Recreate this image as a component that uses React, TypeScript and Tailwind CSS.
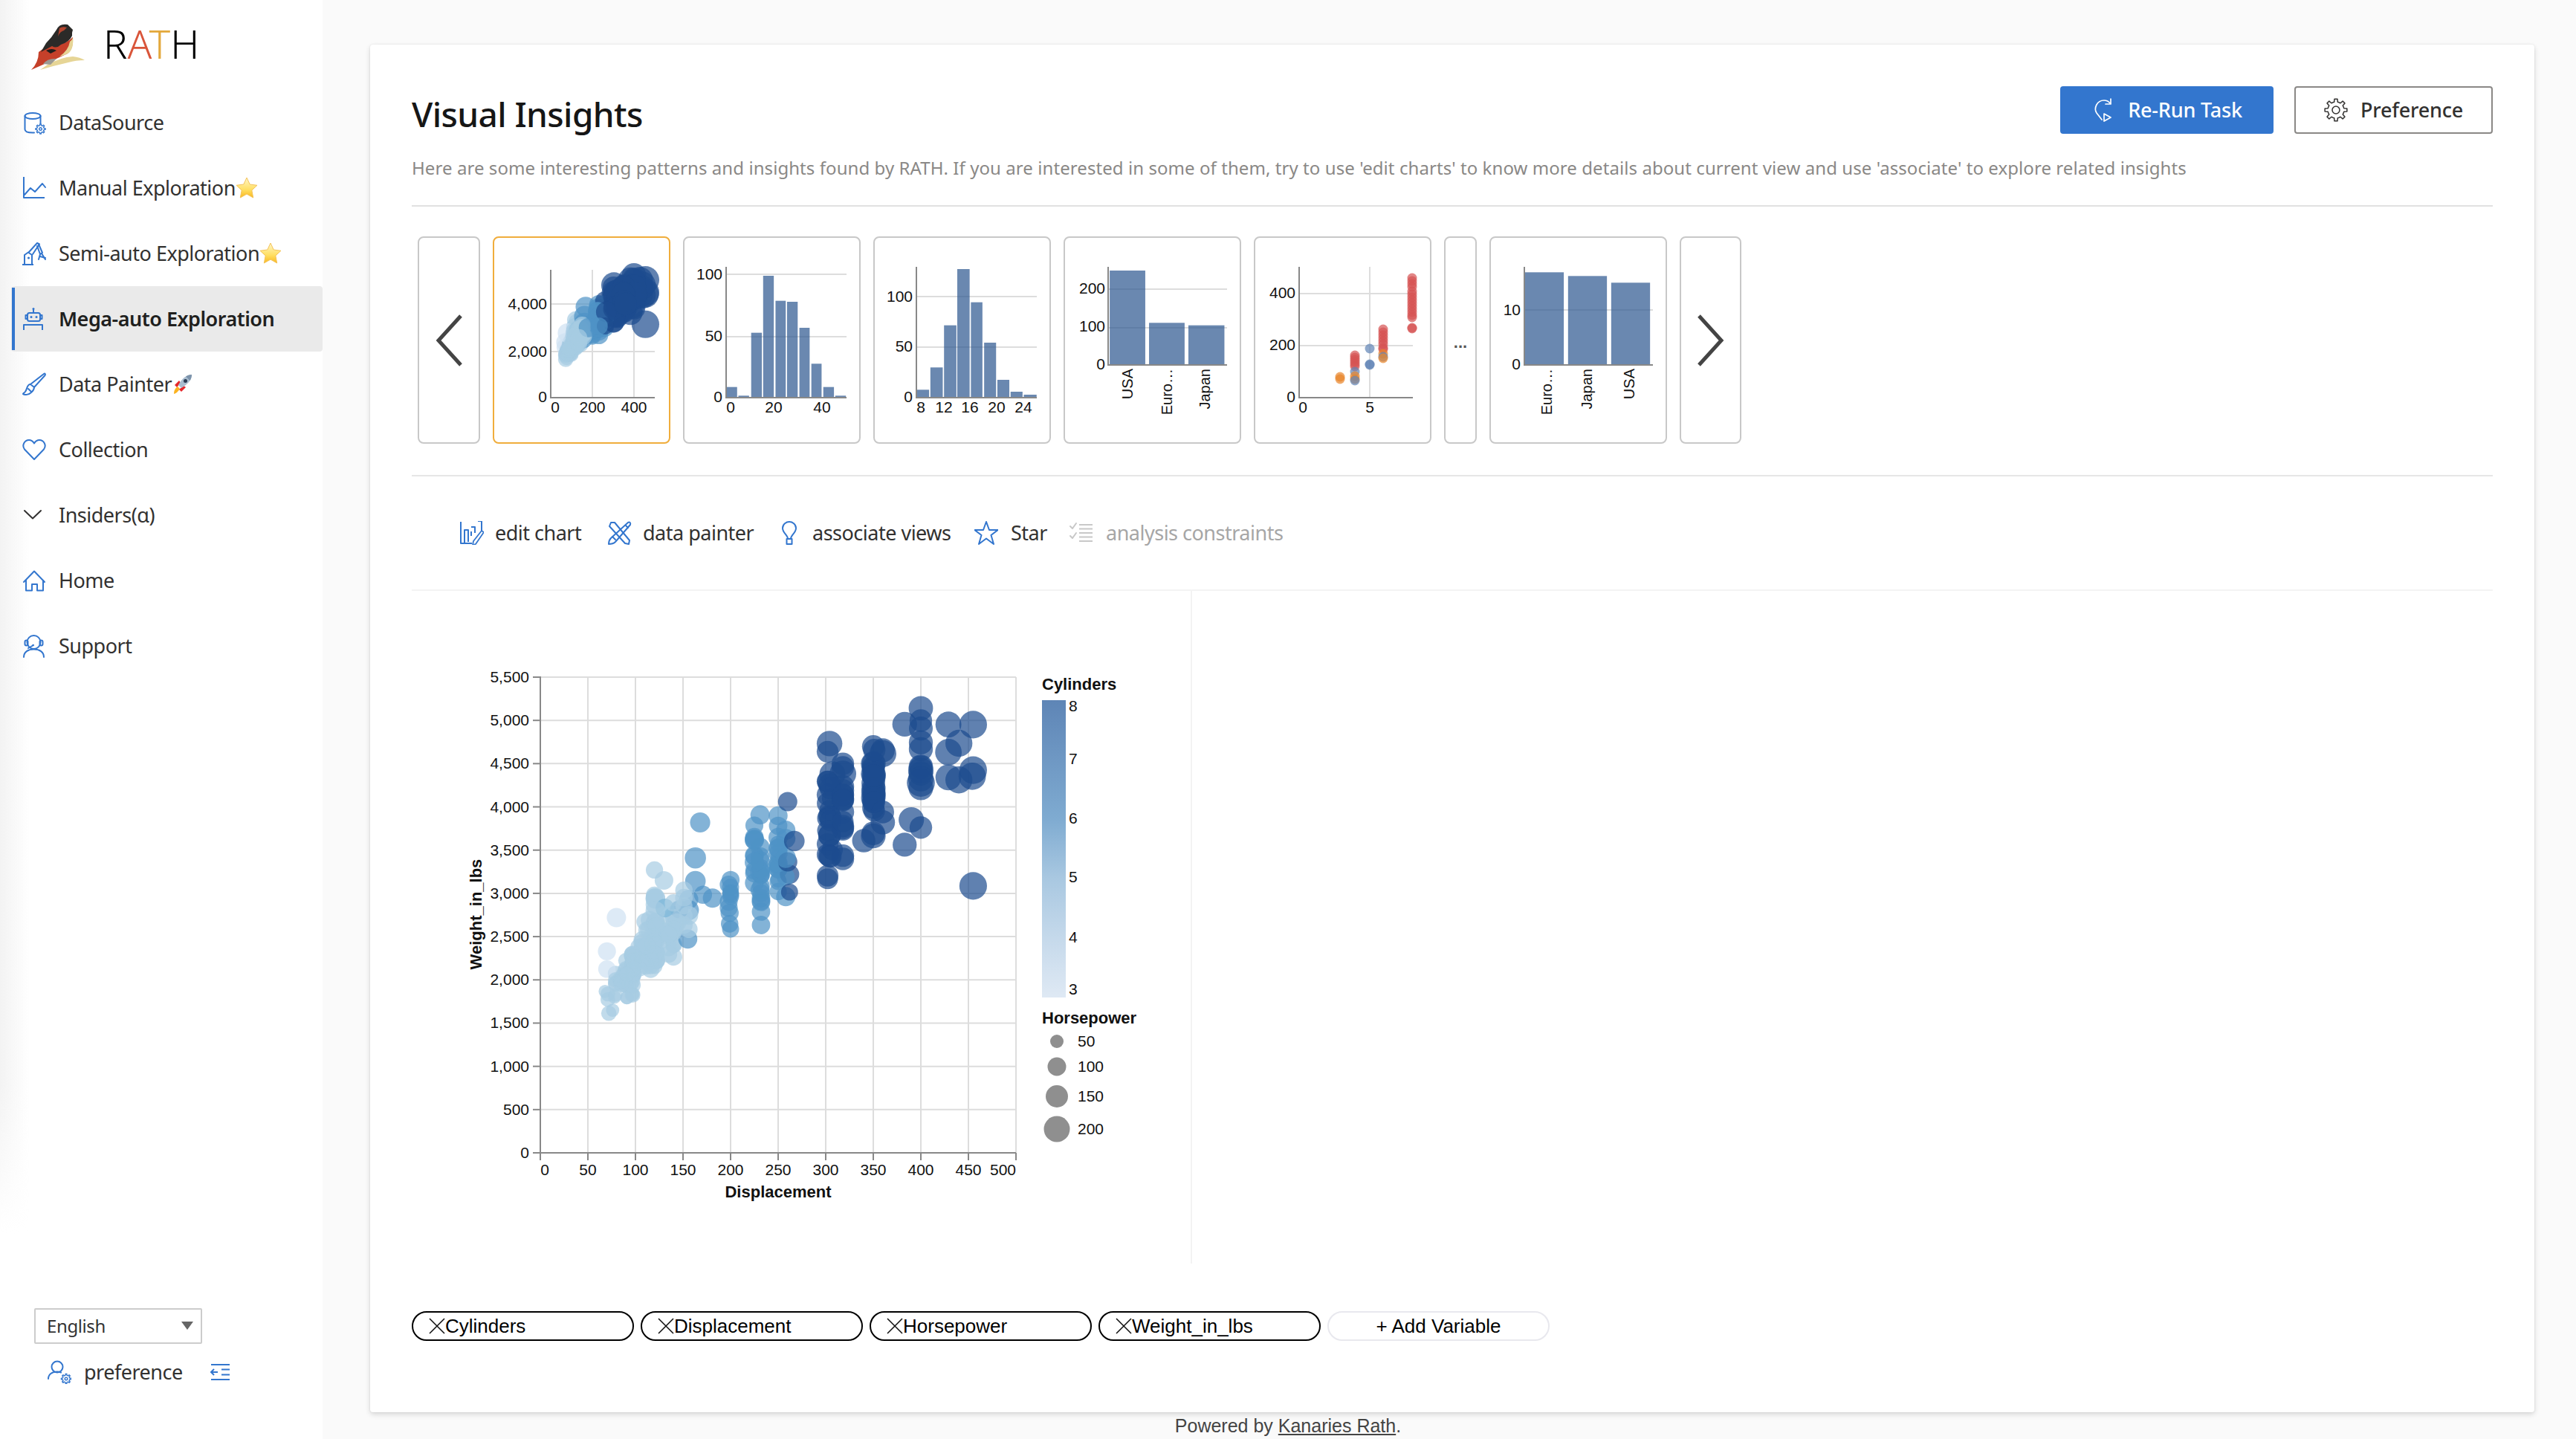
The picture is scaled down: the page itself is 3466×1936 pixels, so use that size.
import type { ReactNode } from "react"

const BLUE = "#3376ce"

// Displacement, Weight, Horsepower, Cylinders
const CARS = `307,3504,130,8 350,3693,165,8 318,3436,150,8 304,3433,150,8 302,3449,140,8 429,4341,198,8 454,4354,220,8 440,4312,215,8 455,4425,225,8 390,3850,190,8 383,3563,170,8 340,3609,160,8 400,3761,150,8 455,3086,225,8 113,2372,95,4 198,2833,95,6 199,2774,97,6 200,2587,85,6 97,2130,88,4 97,1835,46,4 110,2672,87,4 107,2430,90,4 104,2375,95,4 121,2234,113,4 199,2648,90,6 360,4615,215,8 307,4376,200,8 318,4382,210,8 304,4732,193,8 97,2130,88,4 140,2264,90,4 113,2228,95,4 232,2634,100,6 225,3439,105,6 250,3329,100,6 250,3302,88,6 232,3288,100,6 350,4209,165,8 400,4464,175,8 351,4154,153,8 318,4096,150,8 383,4955,180,8 400,4746,170,8 400,5140,175,8 258,2962,110,6 140,2408,72,4 250,3282,100,6 250,3139,88,6 122,2220,86,4 116,2123,90,4 79,2074,70,4 88,2065,76,4 71,1773,65,4 72,1613,69,4 97,1834,60,4 91,1955,70,4 113,2278,95,4 97,2126,80,4 97,2254,54,4 140,2408,90,4 122,2226,86,4 350,4274,165,8 400,4385,175,8 318,4135,150,8 351,4129,153,8 304,3672,150,8 429,4633,208,8 350,4502,155,8 350,4456,160,8 400,4422,190,8 70,2330,97,3 304,3892,150,8 307,4098,130,8 302,4294,140,8 318,4077,150,8 121,2933,112,4 121,2511,76,4 120,2979,87,4 96,2189,69,4 122,2395,86,4 97,2288,92,4 120,2506,97,4 98,2164,80,4 97,2100,88,4 350,4100,175,8 304,3672,150,8 350,3988,145,8 302,4042,137,8 318,3777,150,8 429,4952,198,8 400,4464,150,8 351,4363,158,8 318,4237,150,8 440,4735,215,8 455,4951,225,8 360,3821,175,8 225,3121,105,6 250,3278,100,6 232,2945,100,6 250,3021,88,6 198,2904,95,6 97,1950,46,4 400,4997,150,8 400,4906,167,8 360,4654,170,8 350,4499,180,8 232,2789,100,6 97,2279,88,4 140,2401,72,4 108,2379,94,4 70,2124,90,3 122,2310,85,4 155,2472,107,6 98,2265,90,4 350,4082,145,8 400,4278,230,8 68,1867,49,4 116,2158,75,4 114,2582,91,4 121,2868,112,4 318,3399,150,8 121,2660,110,4 156,2807,122,6 350,3664,180,8 198,3102,95,6 232,2901,100,6 250,3336,100,6 79,1950,67,4 122,2451,80,4 71,1836,65,4 140,2542,75,4 250,3781,100,6 258,3632,110,6 225,3613,105,6 302,4141,140,8 350,4699,150,8 318,4457,150,8 302,4638,140,8 304,4257,150,8 98,2219,83,4 79,1963,67,4 97,2300,78,4 76,1649,52,4 83,2003,61,4 90,2125,75,4 90,2108,75,4 116,2246,75,4 120,2489,97,4 108,2391,93,4 79,2000,67,4 225,3264,95,6 250,3459,105,6 250,3432,72,6 250,3158,72,6 400,4668,170,8 350,4440,145,8 318,4498,150,8 351,4657,148,8 231,3907,110,6 250,3897,105,6 258,3730,110,6 225,3785,95,6 231,3039,110,6 262,3221,110,8 302,3169,129,8 97,2171,75,4 140,2639,83,4 232,2914,100,6 140,2592,78,4 134,2702,96,4 90,2223,71,4 119,2545,97,4 171,2984,97,6 90,1937,70,4 232,3211,90,6 115,2694,95,4 120,2957,88,4 121,2671,98,4 121,2945,115,4 91,1795,53,4 107,2464,86,4 116,2220,81,4 140,2572,92,4 98,2255,79,4 101,2202,83,4 305,4215,140,8 318,4190,150,8 304,3962,120,8 351,4215,152,8 225,3233,100,6 250,3353,105,6 200,3012,81,6 232,3085,90,6 85,2035,52,4 98,2164,60,4 90,1937,70,4 91,1795,53,4 225,3651,100,6 250,3574,78,6 250,3645,110,6 258,3193,95,6 97,1825,71,4 85,1990,70,4 97,2155,75,4 140,2565,72,4 130,3150,102,4 318,3940,150,8 120,3270,88,4 156,2930,108,6 168,3820,120,6 350,4380,180,8 350,4055,145,8 302,3870,130,8 318,3755,150,8 98,2045,68,4 111,2155,80,4 79,1825,58,4 122,2300,96,4 85,1945,70,4 305,3880,145,8 260,4060,110,8 318,4140,145,8 302,4295,130,8 250,3520,110,6 231,3425,105,6 225,3630,100,6 250,3525,98,6 400,4220,180,8 350,4165,170,8 400,4325,190,8 351,4335,149,8 97,1940,78,4 151,2740,88,4 97,2265,75,4 140,2755,89,4 98,2051,63,4 98,2075,83,4 97,1985,67,4 97,2190,78,4 146,2815,97,6 121,2600,110,4 80,2720,110,3 90,1985,48,4 98,2070,66,4 78,1800,52,4 85,1985,70,4 91,2070,60,4 260,3365,110,8 318,3735,140,8 302,3570,139,8 231,3535,105,6 200,3155,95,6 200,2965,85,6 140,2720,88,4 225,3430,100,6 232,3210,90,6 231,3380,105,6 200,3070,85,6 225,3620,110,6 258,3410,120,6 305,3425,145,8 302,3205,139,8 318,4080,140,8 98,2155,68,4 134,2560,95,4 119,2300,97,4 105,2230,75,4 134,2515,95,4 156,2745,105,4 151,2855,85,4 119,2405,97,4 131,2830,103,5 163,3140,125,6 121,2795,115,4 163,3410,133,6 89,1990,71,4 98,2135,68,4 231,3245,115,6 200,2990,85,6 140,2890,88,4 232,3265,90,6 225,3360,110,6 305,3840,130,8 302,3725,129,8 351,3955,138,8 318,3830,135,8 350,4360,155,8 351,4054,142,8 267,3605,125,8 360,3940,150,8 89,2050,71,4 86,1985,65,4 98,2215,75,4 108,2245,75,4 119,2434,92,4 120,2290,90,4 107,2210,72,4 112,2395,88,4 112,2575,88,4 135,2525,84,4 135,2370,84,4 151,2635,90,4 151,2950,92,4 151,3035,90,4 105,2125,63,4 98,2125,70,4 120,2160,75,4 91,2065,67,4 144,2665,96,4 135,2295,84,4 122,2625,86,4 140,2585,88,4 156,2585,92,4 181,2945,110,6 262,3015,85,8 232,3003,90,6 135,2525,84,4`
  .split(" ")
  .map((row) => row.split(",").map(Number))

const CYL_COLOR: Record<number, string> = {
  3: "#cfe1f2",
  4: "#a6cce3",
  5: "#7ab6d9",
  6: "#4f93c6",
  8: "#1d4c8f",
}

const radius = (hp: number) => Math.sqrt(hp) * 1.24

// page coordinates read off the two thumbnail crops
const ax = (v: number) => 540 + v / 1.742
const bx = (v: number) => 1400 + v / 1.568
const zy = (v: number) => 300 + v / 3

function gearPath(cx: number, cy: number, outer: number, inner: number, teeth: number) {
  const pts: string[] = []
  for (let i = 0; i < teeth; i++) {
    const step = (Math.PI * 2) / teeth
    const a = i * step
    const list: [number, number][] = [
      [inner, a - step * 0.5],
      [inner, a - step * 0.27],
      [outer, a - step * 0.17],
      [outer, a + step * 0.17],
      [inner, a + step * 0.27],
    ]
    list.forEach(([r, t]) => pts.push(`${(cx + r * Math.cos(t)).toFixed(2)} ${(cy + r * Math.sin(t)).toFixed(2)}`))
  }
  return `M${pts.join("L")}Z`
}

function Ico({ children, className = "", color = BLUE, sw = 2 }: { children: ReactNode; className?: string; color?: string; sw?: number }) {
  return (
    <svg
      viewBox="0 0 32 32"
      fill="none"
      stroke={color}
      strokeWidth={sw}
      strokeLinecap="round"
      strokeLinejoin="round"
      className={`h-[32px] w-[32px] shrink-0 ${className}`}
    >
      {children}
    </svg>
  )
}

const SmallGear = ({ cx, cy }: { cx: number; cy: number }) => (
  <>
    <path d={gearPath(cx, cy, 6.6, 4.8, 8)} strokeWidth={1.4} />
    <circle cx={cx} cy={cy} r={1.8} strokeWidth={1.4} />
  </>
)

const DataSourceIcon = () => (
  <Ico>
    <ellipse cx="14" cy="7" rx="10.5" ry="4" />
    <path d="M3.5 7V25C3.5 28 8 29.5 14 29.5H16" />
    <path d="M24.5 7V17" />
    <SmallGear cx={24.5} cy={24.5} />
  </Ico>
)
const ManualIcon = () => (
  <Ico>
    <path d="M2 1V29H30" strokeLinecap="butt" />
    <path d="M3 25L11 16L17 21L27 10L31 15" />
  </Ico>
)
const SemiIcon = () => (
  <Ico>
    <path d="M0 31H15M3 31V18L8 14.5L13 18V31" strokeLinecap="butt" />
    <circle cx="8.5" cy="22" r="1.6" fill={BLUE} stroke="none" />
    <path d="M9 14L20 2L23 3.500L14 17" />
    <path d="M22 3.500L27 15L24 17L20 6" />
    <path d="M24 17L22 24M26 16L31 24" />
    <path d="M24 20L31 22" />
  </Ico>
)
const RobotIcon = () => (
  <Ico>
    <circle cx="15" cy="2.500" r="1.500" fill={BLUE} stroke="none" />
    <path d="M15 3V8" />
    <rect x="7" y="8" width="17" height="11" rx="2.500" />
    <path d="M7 11H4.500V16H7M24 11H26.500V16H24" />
    <circle cx="12" cy="13.500" r="1.500" fill={BLUE} stroke="none" />
    <circle cx="19" cy="13.500" r="1.500" fill={BLUE} stroke="none" />
    <path d="M2 31V24H27V31" strokeLinecap="butt" />
  </Ico>
)
const BrushIcon = () => (
  <Ico>
    <path d="M29 2C30.500 1 31.500 2.500 30.500 4L16 20L11 16Z" />
    <path d="M11 16C6 16 7 22 4 26C2.500 28 1 28 1 29C3 31 9 30 12 27C15 24.500 16 21 16 20" />
    <path d="M8 22L12 26" />
  </Ico>
)
const HeartIcon = () => (
  <Ico>
    <path d="M16 29L3 15.500C-1 10 3 3 9 3C12 3 14.500 5 16 7.500C17.500 5 20 3 23 3C29 3 33 10 29 15.500Z" />
  </Ico>
)
const ChevronIcon = () => (
  <Ico color="#323130">
    <path d="M3 10L14 20.500L25 10" />
  </Ico>
)
const HomeIcon = () => (
  <Ico>
    <path d="M2 18L16 3.500L30 18" />
    <path d="M5 15V29.500H13V21H20V29.500H28V15" strokeLinecap="butt" />
  </Ico>
)
const SupportIcon = () => (
  <Ico>
    <circle cx="15.500" cy="11" r="9" />
    <rect x="3.500" y="8.500" width="4" height="7" rx="2" />
    <rect x="23.500" y="8.500" width="4" height="7" rx="2" />
    <path d="M8 19L15 15" />
    <circle cx="14.500" cy="15" r="1.200" fill={BLUE} stroke="none" />
    <path d="M2 31C2 24 8 20.500 15.500 20.500C23 20.500 29 24 29 31" />
  </Ico>
)

function NavItem({ icon, label, extra, active }: { icon: ReactNode; label: string; extra?: ReactNode; active?: boolean }) {
  return (
    <div
      className={`relative flex h-[88px] items-center gap-[17px] rounded-[4px] pl-[15px] text-[27px] tracking-[-0.5px] ${
        active ? "bg-[#eaeaea] font-semibold text-[#201f1e]" : "text-[#323130]"
      }`}
    >
      {active && <span className="absolute bottom-[2px] left-[1px] top-[2px] w-[4px] bg-[#3376ce]" />}
      {icon}
      <span className="flex items-center">
        {label}
        {extra}
      </span>
    </div>
  )
}

const StarEmoji = () => (
  <svg viewBox="0 0 30 30" className="h-[30px] w-[30px]">
    <defs>
      <linearGradient id="star-fill" x1="0" y1="0" x2="0" y2="1">
        <stop offset="0" stopColor="#fff6c8" />
        <stop offset="0.6" stopColor="#ffdf62" />
        <stop offset="1" stopColor="#f9b821" />
      </linearGradient>
    </defs>
    <path d="M15 1L19.200 10L29 11.300L21.800 18L23.700 28L15 23.100L6.300 28L8.200 18L1 11.300L10.800 10Z" fill="url(#star-fill)" stroke="#f4c35a" strokeWidth="1" strokeLinejoin="round" />
  </svg>
)

const RocketEmoji = () => (
  <svg viewBox="0 0 28 28" className="h-[28px] w-[28px]">
    <path d="M3 27C3 22 5 19 8 17L11 20C9 23 7 26 3 27Z" fill="#fbb321" />
    <path d="M4 15L10 9L12 12L7 18Z" fill="#e6262a" />
    <path d="M13 24L19 18L16 16L10 21Z" fill="#e6262a" />
    <path d="M27 1C20 1 14 6 9 15L13 19C22 14 27 8 27 1Z" fill="#a9bdd0" />
    <path d="M27 1C24 1 21 2 19 3.500L24.500 9C26 7 27 4 27 1Z" fill="#7c93ab" />
    <circle cx="18.500" cy="9.500" r="2.500" fill="#2a3b52" />
  </svg>
)

const BirdLogo = () => (
  <svg viewBox="38 30 76 66" className="h-[66px] w-[76px]">
    <path d="M50 70Q62 60 76 60Q88 58 96 50Q97 66 89 72Q72 80 58 86L40 94Q50 84 50 70Z" fill="#c5402a" />
    <path d="M62 87Q80 77 96 76Q106 77 112 81Q100 81 90 84Q72 88 52 94Z" fill="#e6d596" />
    <path d="M92 56Q97 52 96 48Q98 64 91 71Q86 74 78 76Q90 68 92 56Z" fill="#e6d596" />
    <path d="M56 86Q62 78 74 79L66 87Z" fill="#9c9a94" />
    <path d="M89 33Q78 31 74 40Q68 50 60 58L53 70L68 62Q74 66 80 60Q92 56 95 48L95 44L96 40Z" fill="#2b2a28" />
    <path d="M78 38Q82 35 88 37L84 41Q79 42 76 49Z" fill="#b5452e" />
    <path d="M60 68Q68 64 74 68L66 72Z" fill="#1f1e1c" />
  </svg>
)

function Sidebar() {
  return (
    <aside className="relative flex h-[1936px] w-[434px] shrink-0 flex-col justify-between bg-white pl-[15px] font-['Noto_Sans',sans-serif]">
      <div className="pointer-events-none absolute left-0 top-0 h-[1660px] w-[40px] bg-gradient-to-r from-[#f3f3f3] to-transparent [mask-image:linear-gradient(to_bottom,black_88%,transparent)]" />
      <div className="relative">
        <div className="flex h-[121px] items-start pl-[25px] pt-[30px]">
          <BirdLogo />
          <span className="ml-[23px] mt-[-5px] text-[54px] font-light leading-[66px] text-black">
            R<span className="text-[#d9553a]">A</span>
            <span className="text-[#e3a83b]">T</span>H
          </span>
        </div>
        <NavItem icon={<DataSourceIcon />} label="DataSource" />
        <NavItem icon={<ManualIcon />} label="Manual Exploration" extra={<StarEmoji />} />
        <NavItem icon={<SemiIcon />} label="Semi-auto Exploration" extra={<StarEmoji />} />
        <NavItem icon={<RobotIcon />} label="Mega-auto Exploration" active />
        <NavItem icon={<BrushIcon />} label="Data Painter" extra={<RocketEmoji />} />
        <NavItem icon={<HeartIcon />} label="Collection" />
        <NavItem icon={<ChevronIcon />} label="Insiders(α)" />
        <NavItem icon={<HomeIcon />} label="Home" />
        <NavItem icon={<SupportIcon />} label="Support" />
      </div>
      <div className="relative pb-[70px] pl-[31px]">
        <div className="flex h-[48px] w-[226px] items-center justify-between rounded-[2px] border-2 border-[#cccccc] pl-[15px] pr-[10px] text-[24px] tracking-[-0.4px] text-[#333]">
          English
          <span className="h-0 w-0 border-x-[8px] border-t-[11px] border-x-transparent border-t-[#666]" />
        </div>
        <div className="mt-[18px] flex items-center pl-[18px] text-[27px] tracking-[-0.5px] text-[#323130]">
          <Ico>
            <circle cx="13" cy="9" r="7.500" />
            <path d="M1 25C1 19 6 15.500 13 15.500C15 15.500 17 16 18 16.500" />
            <SmallGear cx={25} cy={25} />
          </Ico>
          <span className="ml-[17px]">preference</span>
          <svg viewBox="0 0 28 24" stroke={BLUE} strokeWidth="2" fill="none" className="ml-[36px] h-[24px] w-[28px]">
            <path d="M2 2H27M16 8.500H27M16 15.500H27M2 22H27M11 12H2M6 8L2 12L6 16" />
          </svg>
        </div>
      </div>
    </aside>
  )
}

function Tick({ x, y, children, anchor = "middle", size = 21, bold }: { x: number; y: number; children: ReactNode; anchor?: "start" | "middle" | "end"; size?: number; bold?: boolean }) {
  return (
    <text x={x} y={y} textAnchor={anchor} fontSize={size} fontWeight={bold ? 700 : 400} fill="#111">
      {children}
    </text>
  )
}

function RotTick({ x, label }: { x: number; label: string }) {
  return (
    <text x={x} y={496} textAnchor="end" fontSize={20} fill="#111" transform={`rotate(-90 ${x} 496)`}>
      {label}
    </text>
  )
}

function Thumb({ x, active, children }: { x: number; active?: boolean; children: ReactNode }) {
  return (
    <div className={`h-[279px] w-[239px] shrink-0 rounded-[8px] border-2 bg-white ${active ? "border-[#f0ad3c]" : "border-[#c8c8c8]"}`}>
      <svg viewBox={`${x + 2} 320 235 275`} className="block h-[275px] w-[235px] font-['Liberation_Sans',Arial,sans-serif]">
        {children}
      </svg>
    </div>
  )
}

const Grid = ({ x1, y1, x2, y2 }: { x1: number; y1: number; x2: number; y2: number }) => (
  <line x1={x1} y1={y1} x2={x2} y2={y2} stroke="#dddddd" strokeWidth={2} />
)
const Axis = ({ l, r, t, b }: { l: number; r: number; t: number; b: number }) => (
  <path d={`M${l} ${t}V${b}H${r}`} stroke="#888888" strokeWidth={2} fill="none" />
)
const Bar = ({ x1, x2, top, bottom }: { x1: number; x2: number; top: number; bottom: number }) => (
  <rect x={x1} y={top} width={x2 - x1} height={bottom - top} fill="#2b558e" opacity={0.7} />
)

const HIST_A = [
  [762, 787, 662], [790, 815, 697], [820, 845, 443], [848, 873, 213], [877, 901, 314],
  [904, 929, 318], [933, 957, 423], [961, 985, 568], [989, 1014, 662], [1017, 1042, 697],
]
const HIST_B = [
  [1208, 1237, 673], [1240, 1269, 583], [1272, 1301, 413], [1303, 1332, 186], [1335, 1362, 320],
  [1366, 1394, 483], [1397, 1425, 633], [1428, 1456, 681], [1459, 1489, 693],
]
const RED = "#d65252"
const ORANGE = "#e8842a"
const STEEL = "#5f83b5"
const ORIGIN_POINTS: [number, number, string][] = [
  [1803, 507, ORANGE], [1803, 510, ORANGE],
  ...[478, 481, 484, 487, 490, 493].map((y): [number, number, string] => [1823, y, RED]),
  [1823, 500, STEEL], [1823, 506, ORANGE], [1823, 510, ORANGE], [1823, 512, STEEL],
  [1843, 469, STEEL], [1843, 490, STEEL], [1843, 491, STEEL],
  ...[443, 447, 451, 455, 459, 463, 468, 470].map((y): [number, number, string] => [1861, y, RED]),
  [1861, 476, ORANGE], [1861, 480, STEEL], [1861, 482, ORANGE],
  ...[374, 378, 382, 386, 392, 396, 400, 404, 408, 412, 416, 420, 424, 427, 441, 442].map((y): [number, number, string] => [1900, y, RED]),
]

function Carousel() {
  return (
    <div className="ml-[8px] mt-[40px] flex h-[279px] gap-[17px]">
      <div className="flex h-[279px] w-[84px] shrink-0 items-center justify-center rounded-[8px] border-2 border-[#c8c8c8]">
        <svg viewBox="0 0 40 72" className="h-[72px] w-[40px]" fill="none" stroke="#444" strokeWidth="5">
          <path d="M36 3L6 36L36 69" />
        </svg>
      </div>
      <Thumb x={663} active>
        <Grid x1={797} y1={363} x2={797} y2={535} />
        <Grid x1={853} y1={363} x2={853} y2={535} />
        <Grid x1={741} y1={473} x2={881} y2={473} />
        <Grid x1={741} y1={409} x2={881} y2={409} />
        <Axis l={741} r={881} t={363} b={535} />
        {CARS.map(([d, w, h, c], i) => (
          <circle key={i} cx={741 + d * 0.28} cy={535 - w * 0.032} r={radius(h)} fill={CYL_COLOR[c]} opacity={0.7} />
        ))}
        <Tick x={736} y={416} anchor="end">4,000</Tick>
        <Tick x={736} y={480} anchor="end">2,000</Tick>
        <Tick x={736} y={541} anchor="end">0</Tick>
        <Tick x={747} y={555}>0</Tick>
        <Tick x={797} y={555}>200</Tick>
        <Tick x={853} y={555}>400</Tick>
      </Thumb>
      <Thumb x={919}>
        <Grid x1={977} y1={369} x2={1139} y2={369} />
        <Grid x1={977} y1={453} x2={1139} y2={453} />
        {HIST_A.map(([a, b, t], i) => (
          <Bar key={i} x1={ax(a)} x2={ax(b)} top={zy(t)} bottom={535} />
        ))}
        <Axis l={977} r={1139} t={359} b={535} />
        <Tick x={972} y={376} anchor="end">100</Tick>
        <Tick x={972} y={459} anchor="end">50</Tick>
        <Tick x={972} y={541} anchor="end">0</Tick>
        <Tick x={983} y={555}>0</Tick>
        <Tick x={1041} y={555}>20</Tick>
        <Tick x={1106} y={555}>40</Tick>
      </Thumb>
      <Thumb x={1175}>
        <Grid x1={1233} y1={399} x2={1395} y2={399} />
        <Grid x1={1233} y1={467} x2={1395} y2={467} />
        {HIST_B.map(([a, b, t], i) => (
          <Bar key={i} x1={ax(a)} x2={ax(b)} top={zy(t)} bottom={535} />
        ))}
        <Axis l={1233} r={1395} t={359} b={535} />
        <Tick x={1228} y={406} anchor="end">100</Tick>
        <Tick x={1228} y={473} anchor="end">50</Tick>
        <Tick x={1228} y={541} anchor="end">0</Tick>
        <Tick x={1239} y={555}>8</Tick>
        <Tick x={1270} y={555}>12</Tick>
        <Tick x={1305} y={555}>16</Tick>
        <Tick x={1341} y={555}>20</Tick>
        <Tick x={1377} y={555}>24</Tick>
      </Thumb>
      <Thumb x={1431}>
        <Grid x1={1491} y1={389} x2={1651} y2={389} />
        <Grid x1={1491} y1={441} x2={1651} y2={441} />
        <Bar x1={bx(146)} x2={bx(221)} top={zy(192)} bottom={491} />
        <Bar x1={bx(229)} x2={bx(304)} top={zy(403)} bottom={491} />
        <Bar x1={bx(312)} x2={bx(388)} top={zy(413)} bottom={491} />
        <Axis l={1491} r={1651} t={359} b={491} />
        <Tick x={1487} y={395} anchor="end">200</Tick>
        <Tick x={1487} y={446} anchor="end">100</Tick>
        <Tick x={1487} y={497} anchor="end">0</Tick>
        <RotTick x={1524} label="USA" />
        <RotTick x={1577} label="Euro…" />
        <RotTick x={1628} label="Japan" />
      </Thumb>
      <Thumb x={1687}>
        <Grid x1={1843} y1={359} x2={1843} y2={535} />
        <Grid x1={1748} y1={395} x2={1901} y2={395} />
        <Grid x1={1748} y1={465} x2={1901} y2={465} />
        <Axis l={1748} r={1901} t={359} b={535} />
        {ORIGIN_POINTS.map(([x, y, c], i) => (
          <circle key={i} cx={x} cy={y} r={6.5} fill={c} opacity={0.7} />
        ))}
        <Tick x={1743} y={401} anchor="end">400</Tick>
        <Tick x={1743} y={471} anchor="end">200</Tick>
        <Tick x={1743} y={541} anchor="end">0</Tick>
        <Tick x={1753} y={555}>0</Tick>
        <Tick x={1843} y={555}>5</Tick>
      </Thumb>
      <div className="flex h-[279px] w-[44px] shrink-0 items-center justify-center rounded-[8px] border-2 border-[#c8c8c8] pt-[6px] font-['Liberation_Sans',sans-serif] text-[22px] font-bold text-[#555]">
        ...
      </div>
      <Thumb x={2004}>
        <Grid x1={2051} y1={417} x2={2224} y2={417} />
        <Bar x1={bx(1022)} x2={bx(1104)} top={zy(199)} bottom={491} />
        <Bar x1={bx(1113)} x2={bx(1195)} top={zy(214)} bottom={491} />
        <Bar x1={bx(1204)} x2={bx(1286)} top={zy(241)} bottom={491} />
        <Axis l={2051} r={2224} t={359} b={491} />
        <Tick x={2046} y={424} anchor="end">10</Tick>
        <Tick x={2046} y={497} anchor="end">0</Tick>
        <RotTick x={2088} label="Euro…" />
        <RotTick x={2142} label="Japan" />
        <RotTick x={2199} label="USA" />
      </Thumb>
      <div className="flex h-[279px] w-[83px] shrink-0 items-center justify-center rounded-[8px] border-2 border-[#c8c8c8]">
        <svg viewBox="0 0 40 72" className="h-[72px] w-[40px]" fill="none" stroke="#444" strokeWidth="5">
          <path d="M4 3L34 36L4 69" />
        </svg>
      </div>
    </div>
  )
}

function ActionItem({ icon, label, muted, className = "" }: { icon: ReactNode; label: string; muted?: boolean; className?: string }) {
  return (
    <div className={`flex items-center gap-[15px] ${muted ? "text-[#a6a6a6]" : "text-[#323130]"} ${className}`}>
      {icon}
      {label}
    </div>
  )
}

function Actions() {
  return (
    <div className="flex h-[152px] items-center pl-[65px] text-[27px] tracking-[-0.5px]">
      <ActionItem
        className="w-[199px]"
        label="edit chart"
        icon={
          <Ico>
            <path d="M1 1V30H16" strokeLinecap="butt" />
            <path d="M6 30V12H11V28M15 20V14M15 8H20V16" strokeLinecap="butt" />
            <path d="M24 0H29V14" strokeLinecap="butt" />
            <path d="M29 13L32 15L21 31L17 32L18 27Z" strokeWidth={1.800} />
          </Ico>
        }
      />
      <ActionItem
        className="w-[230px]"
        label="data painter"
        icon={
          <Ico>
            <path d="M4 2L9 2L29 26L28 31L23 30L2 7Z" />
            <path d="M27 2C29 1 31 2 30 5L10 28C7 31 3 31 1 31C1 28 2 25 4 23Z" />
            <path d="M24 6L27 9M6 21L10 25" />
          </Ico>
        }
      />
      <ActionItem
        className="w-[263px]"
        label="associate views"
        icon={
          <Ico className="-mr-[2px]">
            <path d="M12 24C12 19 5 16 5 9.500C5 4 10 1 14 1C18 1 23 4 23 9.500C23 16 16 19 16 24Z" />
            <rect x="10.500" y="24" width="7" height="7" />
          </Ico>
        }
      />
      <ActionItem
        className="w-[127px]"
        label="Star"
        icon={
          <Ico className="mr-[2px]">
            <path d="M16 1L20 12H31.500L22.500 19L26 31L16 23.500L6 31L9.500 19L0.500 12H12Z" />
          </Ico>
        }
      />
      <ActionItem
        muted
        label="analysis constraints"
        icon={
          <Ico color="#c8c8c8" className="mr-[3px]">
            <path d="M14 5H32M14 10.500H32M14 16H32M14 21.500H32M14 27H32" strokeLinecap="butt" />
            <path d="M2 7L5 10L10 3M2 20L5 23L10 16" />
          </Ico>
        }
      />
    </div>
  )
}

const Y_TICKS = [0, 500, 1000, 1500, 2000, 2500, 3000, 3500, 4000, 4500, 5000, 5500]
const X_TICKS = [0, 50, 100, 150, 200, 250, 300, 350, 400, 450, 500]
const chartX = (v: number) => 727 + v * 1.28
const chartY = (v: number) => 1551 - v * (640 / 5500)

function MainChart() {
  return (
    <svg viewBox="620 890 960 740" className="ml-[66px] mt-[95px] block h-[740px] w-[960px] font-['Liberation_Sans',Arial,sans-serif]">
      <defs>
        <linearGradient id="cyl-legend" x1="0" y1="1" x2="0" y2="0">
          <stop offset="0" stopColor="#dfe9f4" />
          <stop offset="0.2" stopColor="#c5d9eb" />
          <stop offset="0.4" stopColor="#a9c8e1" />
          <stop offset="0.6" stopColor="#7fabd1" />
          <stop offset="1" stopColor="#5e85b6" />
        </linearGradient>
      </defs>
      {X_TICKS.slice(1).map((t) => (
        <Grid key={t} x1={chartX(t)} y1={911} x2={chartX(t)} y2={1551} />
      ))}
      {Y_TICKS.slice(1).map((t) => (
        <Grid key={t} x1={727} y1={chartY(t)} x2={1367} y2={chartY(t)} />
      ))}
      <path d="M727 910V1551H1367" stroke="#888888" strokeWidth={2} fill="none" />
      {Y_TICKS.map((t) => (
        <g key={t}>
          <line x1={717} y1={chartY(t)} x2={727} y2={chartY(t)} stroke="#888888" strokeWidth={2} />
          <Tick x={712} y={chartY(t) + 7} anchor="end">
            {t.toLocaleString("en-US")}
          </Tick>
        </g>
      ))}
      {X_TICKS.map((t) => (
        <g key={t}>
          <line x1={chartX(t)} y1={1551} x2={chartX(t)} y2={1561} stroke="#888888" strokeWidth={2} />
          <Tick x={t === 0 ? 733 : chartX(t)} y={1581} anchor={t === 500 ? "end" : "middle"}>
            {t}
          </Tick>
        </g>
      ))}
      {CARS.map(([d, w, h, c], i) => (
        <circle key={i} cx={chartX(d)} cy={chartY(w)} r={radius(h)} fill={CYL_COLOR[c]} opacity={0.7} />
      ))}
      <Tick x={1047} y={1611} size={22} bold>
        Displacement
      </Tick>
      <text x={648} y={1230} textAnchor="middle" fontSize={22} fontWeight={700} fill="#111" transform="rotate(-90 648 1230)">
        Weight_in_lbs
      </text>
      <Tick x={1402} y={928} anchor="start" size={22} bold>
        Cylinders
      </Tick>
      <rect x={1402} y={942} width={32} height={400} fill="url(#cyl-legend)" />
      {[[8, 957], [7, 1028], [6, 1108], [5, 1187], [4, 1268], [3, 1338]].map(([l, y]) => (
        <Tick key={l} x={1438} y={y} anchor="start">
          {l}
        </Tick>
      ))}
      <Tick x={1402} y={1377} anchor="start" size={22} bold>
        Horsepower
      </Tick>
      {[[50, 1401, 9], [100, 1435, 12.5], [150, 1475, 15], [200, 1519, 17.5]].map(([l, y, r]) => (
        <g key={l}>
          <circle cx={1422} cy={y} r={r} fill="#8f8f8f" />
          <Tick x={1450} y={y + 7} anchor="start">
            {l}
          </Tick>
        </g>
      ))}
    </svg>
  )
}

function Pill({ label }: { label: string }) {
  return (
    <div className="flex h-[40px] w-[299px] items-center rounded-full border-2 border-black pl-[21px] text-[26px] text-black">
      <svg viewBox="0 0 22 22" className="h-[22px] w-[22px]" fill="none" stroke="#111" strokeWidth="1.500">
        <path d="M1 1L21 21M21 1L1 21" />
      </svg>
      {label}
    </div>
  )
}

function Main() {
  return (
    <main className="flex-1 font-['Noto_Sans',sans-serif]">
      <section className="ml-[64px] mr-[56px] mt-[60px] h-[1840px] rounded-[4px] bg-white px-[56px] pt-[56px] shadow-[0_3px_7px_rgba(0,0,0,0.14),0_0_3px_rgba(0,0,0,0.08)]">
        <div className="flex h-[64px] items-start justify-between">
          <h1 className="mt-[5px] text-[46px] font-medium leading-[64px] tracking-[-0.6px] text-[#161616]">Visual Insights</h1>
          <div className="flex gap-[28px] text-[27px] font-medium tracking-[-0.2px]">
            <button className="flex h-[64px] w-[287px] items-center justify-center gap-[17px] rounded-[4px] bg-[#3376ce] text-white">
              <Ico color="#ffffff" sw={1.700}>
                <path d="M14 29L7 20C3 14 7 3 17 3C20 3 23 4 25 7" />
                <path d="M26 1V8H19" />
                <path d="M17 21L26 26L17 31Z" />
              </Ico>
              Re-Run Task
            </button>
            <button className="flex h-[64px] w-[267px] items-center justify-center gap-[17px] rounded-[4px] border-2 border-[#8a8886] text-[#323130]">
              <Ico color="#323130" sw={1.500}>
                <path d={gearPath(16, 16, 15, 11, 8)} />
                <circle cx="16" cy="16" r="5" />
              </Ico>
              Preference
            </button>
          </div>
        </div>
        <p className="mt-[30px] h-[32px] text-[24px] leading-[32px] tracking-[0.07px] text-[#8a8886]">
          Here are some interesting patterns and insights found by RATH. If you are interested in some of them, try to use 'edit charts' to know more details about current view and use 'associate' to explore related insights
        </p>
        <div className="mt-[34px] h-[2px] bg-[#e1e1e1]" />
        <Carousel />
        <div className="mt-[42px] h-[2px] bg-[#e6e6e6]" />
        <Actions />
        <div className="h-[2px] bg-[#f4f4f4]" />
        <div className="flex h-[905px]">
          <div className="h-full w-[1050px] border-r-2 border-[#f3f3f3]">
            <MainChart />
          </div>
        </div>
        <div className="mt-[64px] flex gap-[9px] font-['Liberation_Sans',Arial,sans-serif]">
          <Pill label="Cylinders" />
          <Pill label="Displacement" />
          <Pill label="Horsepower" />
          <Pill label="Weight_in_lbs" />
          <div className="flex h-[40px] w-[299px] items-center justify-center rounded-full border-2 border-[#e8e8ee] text-[26px] text-black">
            + Add Variable
          </div>
        </div>
      </section>
      <footer className="-ml-[434px] mt-[3px] text-center font-['Liberation_Sans',Arial,sans-serif] text-[25px] leading-[30px] text-[#444]">
        Powered by <span className="underline">Kanaries Rath</span>.
      </footer>
    </main>
  )
}

export default function App() {
  return (
    <div className="flex h-[1936px] w-[3466px] overflow-hidden bg-[#fafafa]">
      <Sidebar />
      <Main />
    </div>
  )
}
